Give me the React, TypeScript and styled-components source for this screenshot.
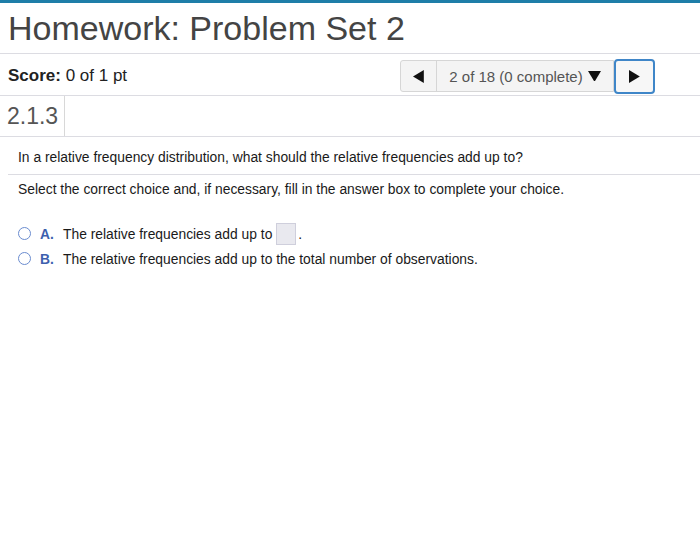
import React from "react";
import styled, { createGlobalStyle } from "styled-components";

const Global = createGlobalStyle`
  html, body {
    margin: 0;
    padding: 0;
    background: #fff;
    font-family: "Liberation Sans", Arial, sans-serif;
  }
`;

const Page = styled.div`
  border-top: 3px solid #1e7ea8;
  width: 700px;
  min-height: 550px;
`;

const Header = styled.div`
  height: 50px;
  border-bottom: 1px solid #dcdce2;
  display: flex;
  align-items: center;
  padding: 0 8px;
`;

const Title = styled.h1`
  margin: 0;
  font-size: 34px;
  font-weight: normal;
  color: #444;
`;

const ScoreRow = styled.div`
  height: 42px;
  box-sizing: border-box;
  padding: 3px 45px 0 8px;
  border-bottom: 1px solid #dcdce2;
  display: flex;
  align-items: center;
  justify-content: space-between;
`;

const Score = styled.div`
  font-size: 17px;
  color: #222;
  b {
    font-weight: bold;
  }
`;

const Nav = styled.div`
  display: flex;
  align-items: center;
`;

const NavGroup = styled.div`
  display: flex;
  height: 30px;
  border: 1px solid #d6d6d6;
  border-radius: 3px 0 0 3px;
  background: #f4f4f4;
`;

const PrevButton = styled.div`
  width: 35px;
  display: flex;
  align-items: center;
  justify-content: center;
  border-right: 1px solid #d6d6d6;
`;

const Picker = styled.div`
  width: 176px;
  display: flex;
  align-items: center;
  justify-content: center;
  gap: 5px;
  font-size: 15px;
  color: #555;
`;

const NextButton = styled.div`
  width: 37px;
  height: 31px;
  display: flex;
  align-items: center;
  justify-content: center;
  border: 2px solid #3f86c8;
  border-radius: 4px;
  background: #f7f7f7;
`;

const IdRow = styled.div`
  height: 40px;
  border-bottom: 1px solid #dcdce2;
  display: flex;
`;

const QId = styled.div`
  padding: 0 6px 0 7px;
  font-size: 23px;
  color: #555;
  border-right: 1px solid #d8d8d8;
  display: flex;
  align-items: center;
`;

const Body = styled.div`
  padding-left: 8px;
  font-size: 13.85px;
  line-height: 16px;
  color: #1a1a1a;
`;

const Question = styled.div`
  padding: 12px 10px 9px;
  border-bottom: 1px solid #dcdce2;
`;

const Instruction = styled.div`
  padding: 6px 10px 0;
`;

const Choices = styled.div`
  padding: 27px 0 0 10px;
  display: flex;
  flex-direction: column;
  gap: 6px;
`;

const Choice = styled.div`
  display: flex;
  align-items: center;
  height: 19px;
`;

const Radio = styled.span`
  width: 11px;
  height: 11px;
  border: 1.5px solid #6a8ccf;
  border-radius: 50%;
  margin-right: 9px;
`;

const Letter = styled.span`
  color: #3d5fae;
  font-weight: bold;
  width: 23px;
`;

const AnswerBox = styled.span`
  display: inline-block;
  width: 18px;
  height: 20px;
  margin: 0 2px 0 4px;
  background: #e9e9ef;
  border: 1px solid #cfcfdc;
`;

const Tri = ({ dir, size = 11 }: { dir: "left" | "right" | "down"; size?: number }) => {
  const pts =
    dir === "left" ? "10,0 10,12 0,6" : dir === "right" ? "0,0 10,6 0,12" : "0,0 12,0 6,10";
  const w = dir === "down" ? 12 : 10;
  const h = dir === "down" ? 10 : 12;
  return (
    <svg width={(w * size) / 12} height={(h * size) / 12} viewBox={`0 0 ${w} ${h}`}>
      <polygon points={pts} fill="#111" />
    </svg>
  );
};

export default function App() {
  return (
    <Page>
      <Global />
      <Header>
        <Title>Homework: Problem Set 2</Title>
      </Header>
      <ScoreRow>
        <Score>
          <b>Score:</b> 0 of 1 pt
        </Score>
        <Nav>
          <NavGroup>
            <PrevButton>
              <Tri dir="left" size={13} />
            </PrevButton>
            <Picker>
              2 of 18 (0 complete) <Tri dir="down" size={13} />
            </Picker>
          </NavGroup>
          <NextButton>
            <Tri dir="right" size={13} />
          </NextButton>
        </Nav>
      </ScoreRow>
      <IdRow>
        <QId>2.1.3</QId>
      </IdRow>
      <Body>
        <Question>
          In a relative frequency distribution, what should the relative frequencies add up to?
        </Question>
        <Instruction>
          Select the correct choice and, if necessary, fill in the answer box to complete your
          choice.
        </Instruction>
        <Choices>
          <Choice>
            <Radio />
            <Letter>A.</Letter>
            The relative frequencies add up to
            <AnswerBox />.
          </Choice>
          <Choice>
            <Radio />
            <Letter>B.</Letter>
            The relative frequencies add up to the total number of observations.
          </Choice>
        </Choices>
      </Body>
    </Page>
  );
}
